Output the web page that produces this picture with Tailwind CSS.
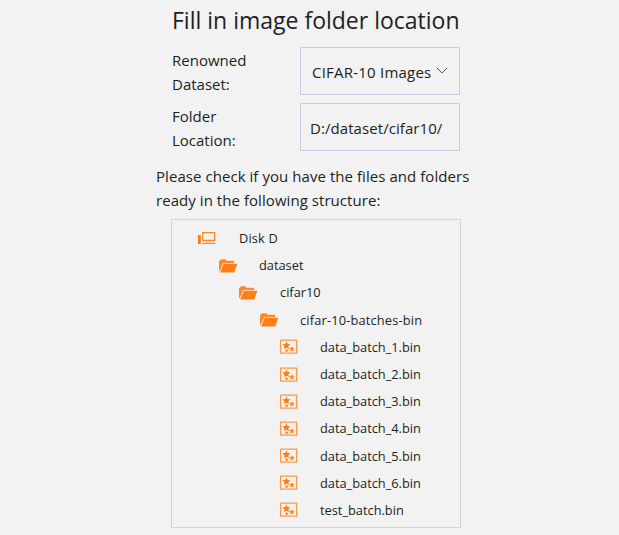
<!DOCTYPE html>
<html lang="en">
<head>
<meta charset="utf-8">
<title>Image folder location</title>
<script src="https://cdn.jsdelivr.net/npm/@tailwindcss/browser@4"></script>
</head>
<body class="h-[535px] overflow-hidden bg-[#f2f2f2] font-['Open_Sans','Noto_Sans',sans-serif] text-[15px] leading-6 text-[#1c1f23]">
<svg class="hidden">
  <symbol id="disk" viewBox="0 0 20 16">
    <path d="M1 4h2.8v9H1z" fill="#fd7e14"/>
    <path d="M5.6 1.6h12v7.9h-12z" fill="none" stroke="#fd8a2a" stroke-width="1.3"/>
    <path d="M5 12.4h13.4" stroke="#fd8a2a" stroke-width="1.3"/>
    <path d="M10 10h3.5v1H10z" fill="#fcb882"/>
  </symbol>
  <symbol id="folder" viewBox="0 0 20 16">
    <path d="M1 13.5V3.3L3 1.3h4.3l1.5 1.5h7.4V5H5.3L2.2 12z" fill="#fd8a2a"/>
    <path d="M5.7 5.8h13.6l-3 8.8H2.1z" fill="#fd7e14"/>
  </symbol>
  <symbol id="picture" viewBox="0 0 20 16">
    <path d="M1.6 1.2h16v13h-16z" fill="none" stroke="#fc9a4c" stroke-width="1.3"/>
    <path d="M7.3 2.5l1.2 2.5 2.9.3-2.1 1.9.7 2.8-2.6-1.3-2.5 1.4.5-2.9-2.1-1.9 2.8-.3z" fill="#fd7e14"/>
    <path d="M13 7.2l.8 1.6 1.9.3-1.4 1.4.3 1.9-1.7-.8-1.7.8.2-1.9-1.3-1.4 1.9-.3z" fill="#fd8a2a"/>
    <path d="M7.6 9.8l.7 1.1 1.2.3-.9.9.1 1.2-1.1-.5-1.1.5.1-1.2-.9-.9 1.2-.3z" fill="#fd8a2a"/>
  </symbol>
</svg>
<main class="ml-[156px] w-[330px] whitespace-nowrap">
  <h1 class="ml-4 pt-1.5 pb-px text-[23px] leading-7">Fill in image folder location</h1>
  <div class="mt-3 ml-4 flex h-12">
    <label class="w-32 pt-[1px]">Renowned<br>Dataset:</label>
    <div class="flex w-[160px] items-center border border-[#cdcae3] pl-[11px]">
      <div class="w-[119px] overflow-hidden pt-0.5 tracking-[0.22px]">CIFAR-10 Images</div>
      <svg class="ml-[5px] h-3 w-3" viewBox="0 0 12 12" fill="none" stroke="#555"><path d="M.8 2.8L6 8l5.2-5.2"/></svg>
    </div>
  </div>
  <div class="mt-2 ml-4 flex h-12">
    <label class="w-32 pt-[1px]">Folder<br>Location:</label>
    <div class="flex w-[160px] items-center border border-[#cdcae3] pt-0.5 pl-[9px] tracking-[0.07px]">D:/dataset/cifar10/</div>
  </div>
  <p class="mt-[13px] tracking-[0.055px]">Please check if you have the files and folders<br>ready in the following structure:</p>
  <ul class="mt-[7px] ml-[15px] h-[309px] w-[290px] border border-[#d3d4d6] pt-[5px] text-[12.8px] leading-[27.2px]">
    <li class="flex h-[27.2px] items-center pl-[25px]"><svg class="h-4 w-5"><use href="#disk"/></svg><span class="ml-[22px] tracking-[0.15px]">Disk D</span></li>
    <li class="flex h-[27.2px] items-center pl-[46px]"><svg class="h-4 w-5"><use href="#folder"/></svg><span class="ml-[21px]">dataset</span></li>
    <li class="flex h-[27.2px] items-center pl-[66px]"><svg class="h-4 w-5"><use href="#folder"/></svg><span class="ml-[22px]">cifar10</span></li>
    <li class="flex h-[27.2px] items-center pl-[86.5px]"><svg class="h-4 w-5"><use href="#folder"/></svg><span class="ml-[21.5px] tracking-[0.18px]">cifar-10-batches-bin</span></li>
    <li class="flex h-[27.2px] items-center pl-[107px]"><svg class="h-4 w-5"><use href="#picture"/></svg><span class="ml-[21px]">data_batch_1.bin</span></li>
    <li class="flex h-[27.2px] items-center pl-[107px]"><svg class="h-4 w-5"><use href="#picture"/></svg><span class="ml-[21px]">data_batch_2.bin</span></li>
    <li class="flex h-[27.2px] items-center pl-[107px]"><svg class="h-4 w-5"><use href="#picture"/></svg><span class="ml-[21px]">data_batch_3.bin</span></li>
    <li class="flex h-[27.2px] items-center pl-[107px]"><svg class="h-4 w-5"><use href="#picture"/></svg><span class="ml-[21px]">data_batch_4.bin</span></li>
    <li class="flex h-[27.2px] items-center pl-[107px]"><svg class="h-4 w-5"><use href="#picture"/></svg><span class="ml-[21px]">data_batch_5.bin</span></li>
    <li class="flex h-[27.2px] items-center pl-[107px]"><svg class="h-4 w-5"><use href="#picture"/></svg><span class="ml-[21px]">data_batch_6.bin</span></li>
    <li class="flex h-[27.2px] items-center pl-[107px]"><svg class="h-4 w-5"><use href="#picture"/></svg><span class="ml-[21px]">test_batch.bin</span></li>
  </ul>
</main>
</body>
</html>
